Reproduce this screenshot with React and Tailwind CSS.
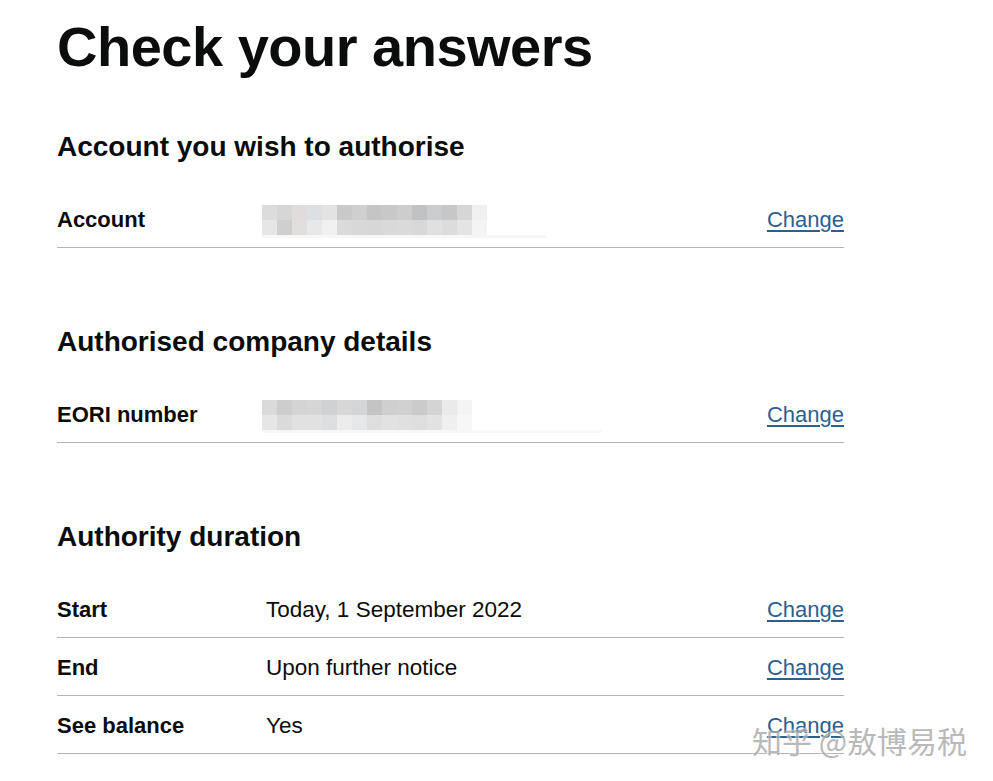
import React from "react";

// Pixelated blocks covering redacted values
const ACCOUNT_BLOCKS = [
  ["#dcdcdc", "#d6d6d6", "#e0dcdc", "#dde0e3", "#e3e3e3", "#c9c9c9", "#cfcfcf", "#c5c5c5", "#c8c8c8", "#cdcdcd", "#c2c2c2", "#cacccd", "#c7c7c7", "#d6d6d6", "#f0f0f0"],
  ["#e6e6e6", "#cfcfcf", "#e1dede", "#e6e8ea", "#f0f0f0", "#dadada", "#d8d8d8", "#d7d7d7", "#d9d9d9", "#dadada", "#d8d8d8", "#dee0e1", "#dcdcdc", "#e4e4e4", "#f4f4f4"],
];

const EORI_BLOCKS = [
  ["#dadada", "#cdcdcd", "#d4d4d4", "#d6d6d6", "#cfd1d2", "#d7d7d7", "#d4d5d7", "#c4c4c4", "#cfcfcf", "#d1d1d1", "#cbcbcb", "#d4d4d4", "#eaeaea", "#f4f4f4"],
  ["#e6e6e6", "#dadada", "#e1e1e1", "#e1e1e1", "#dcdedf", "#ececec", "#e6e7e9", "#dedede", "#e2e2e2", "#e0e0e0", "#dedede", "#e2e2e2", "#efefef", "#f7f7f7"],
];

function Pixelated({ blocks, fadeWidth }) {
  return (
    <div className="relative h-[30px]">
      <div className="flex flex-col">
        {blocks.map((row, i) => (
          <div key={i} className="flex">
            {row.map((c, j) => (
              <div key={j} className="w-[15px] h-[15px]" style={{ backgroundColor: c }} />
            ))}
          </div>
        ))}
      </div>
      <div
        className="absolute top-[30px] left-0 h-[3px] bg-[#f7f7f7]"
        style={{ width: fadeWidth }}
      />
    </div>
  );
}

function Row({ label, value }) {
  return (
    <div className="flex items-center border-b border-[#b1b4b6] pt-[15px] pb-[12px] leading-[30px]">
      <div className="w-[209px] font-bold text-[22px] text-[#0b0c0c]">{label}</div>
      <div className="flex-1 text-[22.5px] text-[#0b0c0c]">{value}</div>
      <a
        href="#"
        className="text-[22px] text-[#2b5f92] underline decoration-[1.5px] underline-offset-[3px]"
      >
        Change
      </a>
    </div>
  );
}

function Section({ title, children, last }) {
  return (
    <div className={last ? "" : "mb-[76px]"}>
      <h2 className="text-[28px] leading-[36px] font-bold text-[#0b0c0c] mb-[25px]">
        {title}
      </h2>
      <div>{children}</div>
    </div>
  );
}

export default function App() {
  return (
    <div
      className="relative min-h-screen bg-white overflow-hidden"
      style={{ fontFamily: '"Liberation Sans", Arial, sans-serif' }}
    >
      <div className="w-[787px] ml-[57px]">
        <h1 className="mt-[16px] text-[56px] leading-[62px] font-bold tracking-[-0.5px] text-[#0b0c0c] mb-[51px]">
          Check your answers
        </h1>

        <Section title="Account you wish to authorise">
          <Row label="Account" value={<div className="ml-[-4px]"><Pixelated blocks={ACCOUNT_BLOCKS} fadeWidth={285} /></div>} />
        </Section>

        <Section title="Authorised company details">
          <Row label="EORI number" value={<div className="ml-[-4px]"><Pixelated blocks={EORI_BLOCKS} fadeWidth={340} /></div>} />
        </Section>

        <Section title="Authority duration" last>
          <Row label="Start" value="Today, 1 September 2022" />
          <Row label="End" value="Upon further notice" />
          <Row label="See balance" value="Yes" />
        </Section>
      </div>

      <div
        className="absolute left-[752px] top-[720px] text-[30px] leading-[40px] text-[#a8a8a8] opacity-80"
        style={{ fontFamily: '"Noto Sans CJK SC", sans-serif', textShadow: "0 0 2px #fff, 0 0 2px #fff" }}
      >
        知乎 @敖博易税
      </div>
    </div>
  );
}
